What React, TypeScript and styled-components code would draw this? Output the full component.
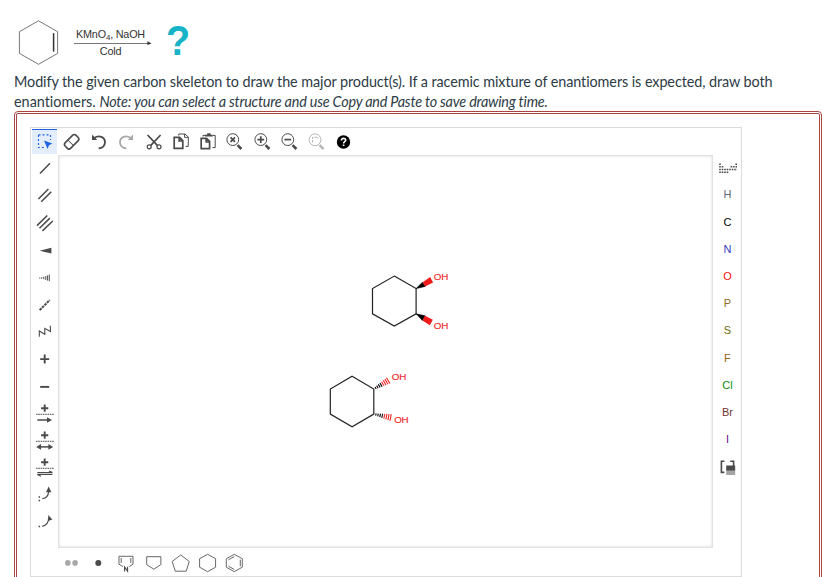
import React from "react";
import styled, { createGlobalStyle } from "styled-components";

const CELL = 27.2;
const INK = "#4a4a4a";
const FAINT = "#a8a8a8";

const GlobalStyle = createGlobalStyle`
  * { box-sizing: border-box; }
  body {
    margin: 0;
    background: #fff;
    overflow: hidden;
  }
`;

const Page = styled.main`
  width: 822px;
  height: 577px;
  overflow: hidden;
  padding-left: 14px;
  font-family: Lato, sans-serif;
  color: #2d3b45;
`;

const Reaction = styled.div`
  display: flex;
  align-items: flex-start;
  height: 72px;
  padding: 19px 0 0 4px;
`;

const Reagents = styled.div`
  width: 78px;
  margin-left: 14px;
  padding-top: 9px;
  display: flex;
  flex-direction: column;
  align-items: center;
  font: 10.8px/12px "Liberation Sans", Arial, sans-serif;
  letter-spacing: -0.2px;
  color: #333;
  white-space: nowrap;

  sub {
    font-size: 8px;
    line-height: 0;
    vertical-align: -2px;
  }
`;

const ReagentLine = styled.span<{ $shift?: number }>`
  height: 12px;
  margin-right: ${(p) => p.$shift ?? 0}px;
`;

const Question = styled.span`
  margin-left: 14px;
  font: bold 43px/42px "Liberation Sans", Arial, sans-serif;
  color: #17b3c6;
  transform: scaleX(0.92);
  transform-origin: left;
`;

const Prompt = styled.p`
  margin: 0;
  height: 39px;
  font-size: 14.4px;
  line-height: 20px;
  white-space: nowrap;
  font-variant-ligatures: none;

  em {
    letter-spacing: -0.2px;
  }
`;

const PromptLine = styled.span<{ $tracking: number }>`
  display: block;
  letter-spacing: ${(p) => p.$tracking}px;
`;

const AnswerFrame = styled.section`
  width: 808px;
  height: 480px;
  border: 3px double #a94442;
  border-radius: 4px;
  padding: 13px;
`;

const Editor = styled.div`
  width: 712px;
  height: 450px;
  border: 1px solid #dcdcdc;
  display: grid;
  grid-template-columns: ${CELL}px 1fr ${CELL}px;
  grid-template-rows: ${CELL}px 1fr ${CELL}px;
`;

const TopBar = styled.div`
  grid-column: 1 / -1;
  display: flex;
`;

const SideBar = styled.div`
  display: flex;
  flex-direction: column;
`;

const BottomBar = styled.div`
  grid-column: 2;
  display: flex;
`;

const ToolButton = styled.button<{ $active?: boolean }>`
  flex: none;
  width: ${CELL}px;
  height: ${CELL}px;
  padding: 0;
  border: 0;
  background: ${(p) =>
    p.$active
      ? "linear-gradient(#1f63e0, #1f63e0) 1px 1px / 25px 1px no-repeat, linear-gradient(#e4edfc, #e4edfc) 1px 1px / 25px 25px no-repeat"
      : "none"};
`;

const ElementButton = styled(ToolButton)`
  padding-bottom: 2px;
  color: ${(p) => p.color};
  font: 11px/25px "Liberation Sans", Arial, sans-serif;
`;

const Glyph = styled.svg`
  display: block;
  width: ${CELL}px;
  height: ${CELL}px;
`;

const Canvas = styled.div`
  margin: 0 0.8px 0.8px 0;
  border: 1px solid #e2e2e2;
  box-shadow: inset 0 0 3px #d8d8d8;
  overflow: hidden;
`;

const Drawing = styled.svg`
  display: block;
`;

const Icon = ({
  children,
  color = INK,
  weight = 1.5,
}: {
  children: React.ReactNode;
  color?: string;
  weight?: number;
}) => (
  <Glyph viewBox="0 0 27.2 27.2" fill="none" stroke={color} strokeWidth={weight}>
    {children}
  </Glyph>
);

const Magnifier = ({ sign, color = INK }: { sign: string; color?: string }) => (
  <Icon color={color}>
    <circle cx="11.8" cy="11.6" r="5.9" strokeWidth="1" />
    <path d="M16.6 17.2l3.8 3.8" strokeWidth="2.6" />
    <path d={sign} strokeWidth="1.7" />
  </Icon>
);

const topTools: [string, React.ReactNode][] = [
  [
    "Select",
    <Icon color="#1f63e0">
      <path d="M7.5 6.9H19.5V12M7.5 6.9V19.5H13" strokeDasharray="2 2" strokeWidth="1.1" />
      <path d="M13 12.6L21.4 15.6L18 17.2L16.6 20.9Z" fill="#1f63e0" stroke="none" />
    </Icon>,
  ],
  [
    "Erase",
    <Icon weight={1.6}>
      <g transform="rotate(-45 13.6 13.7)">
        <rect x="5.9" y="9.9" width="15.4" height="7.8" rx="2.6" />
        <path d="M12.2 9.9v7.8" strokeWidth="1" />
      </g>
    </Icon>,
  ],
  [
    "Undo",
    <Icon weight={1.8}>
      <path d="M9.5 9.8C14 6.6 20 9 20 14.2C20 17.6 17.4 20.2 13.6 20.4" />
      <path d="M7 6.4V12H12.2Z" fill={INK} stroke="none" />
    </Icon>,
  ],
  [
    "Redo",
    <Icon weight={1.8} color={FAINT}>
      <path d="M17.5 9.8C13 6.6 7 9 7 14.2C7 17.6 9.6 20.2 13.4 20.4" />
      <path d="M20 6.4V12H14.8Z" fill={FAINT} stroke="none" />
    </Icon>,
  ],
  [
    "Cut",
    <Icon>
      <path d="M7.6 7L17.6 17.6M20.6 7L10.6 17.6" strokeWidth="1.7" />
      <circle cx="9.2" cy="18.8" r="2" strokeWidth="1.2" />
      <circle cx="19" cy="18.8" r="2" strokeWidth="1.2" />
    </Icon>,
  ],
  [
    "Copy",
    <Icon>
      <path d="M11.8 7.5V6H18L21.3 9V18.4H18.6M17.6 6V9.4H21.3" strokeWidth="1" />
      <path d="M7.2 9.4H12.6L15.8 12.6V20.4H7.2ZM12.2 9.6V13H15.6" strokeWidth="1.7" />
    </Icon>,
  ],
  [
    "Paste",
    <Icon>
      <path d="M9 8.6V7.4H11M19 7.4H21.2V19.6H18.4" strokeWidth="1" />
      <path d="M11 8.4V6.8H13.2V5.2H16.6V6.8H18.8V8.4Z" fill={INK} stroke="none" />
      <path d="M7.2 10.4H12.6L15.6 13.4V20.6H7.2ZM12.2 10.6V14H15.4" strokeWidth="1.7" />
    </Icon>,
  ],
  ["Reset zoom", <Magnifier sign="M9.6 9.4l4.4 4.4M14 9.4l-4.4 4.4" />],
  ["Zoom in", <Magnifier sign="M11.8 8.2v6.8M8.4 11.6h6.8" />],
  ["Zoom out", <Magnifier sign="M8.4 11.6h6.8" />],
  [
    "Zoom to selection",
    <Icon color="#b4b4b4">
      <circle cx="12" cy="11.8" r="5.9" strokeWidth="1" />
      <path d="M16.6 17.2l4 4" strokeWidth="2.4" />
      <path d="M9.5 14.5V9.3H15V10.6" strokeWidth="1" strokeDasharray="2.6 1" />
    </Icon>,
  ],
  [
    "Help",
    <Icon>
      <circle cx="13.5" cy="14" r="6.7" fill="#000" stroke="none" />
      <path
        d="M11.4 12.6C11.3 9.7 15.8 9.8 15.7 12.3C15.6 13.7 13.6 13.7 13.6 15.4M13.6 16.4V18"
        stroke="#fff"
        strokeWidth="1.6"
      />
    </Icon>,
  ],
];

const Reagent = ({ children }: { children: React.ReactNode }) => (
  <Icon>
    <path d="M13.7 4.6v7.2M10.1 8.2h7.2" strokeWidth="1.9" />
    <path d="M5 14.3h18" strokeWidth="1" strokeDasharray="1.6 .7" />
    {children}
  </Icon>
);

const leftTools: [string, React.ReactNode][] = [
  ["Single bond", <Icon><path d="M9 18.5L19 8.3" /></Icon>],
  ["Double bond", <Icon><path d="M7.4 17L17.4 7M10.2 19.7L20.3 9.7" /></Icon>],
  ["Triple bond", <Icon><path d="M6 15.6L16.3 5.5M8.5 18.2L18.9 8.1M11.4 20.9L21.8 11" /></Icon>],
  ["Wedge bond", <Icon><path d="M8.6 13.7L20.4 10.8V16.4Z" fill={INK} stroke="none" /></Icon>],
  [
    "Hash bond",
    <Icon weight={1}>
      <path d="M8.8 13.4v1.2M10.8 13.2v1.6M12.8 12.8v2.4M14.8 12v4M16.6 11.4v5.2M18.3 10.6v6.6" />
    </Icon>,
  ],
  ["Dashed bond", <Icon weight={2}><path d="M8.7 19.1L18.8 9" strokeDasharray="2.6 .8" /></Icon>],
  ["Undefined bond", <Icon weight={1.1}><path d="M8.3 18.8V13L13.8 16.2V10.4L19.4 13.6V7.8" /></Icon>],
  ["Plus", <Icon weight={1.9}><path d="M13.7 8.6v9M9.2 13.1h9" /></Icon>],
  ["Minus", <Icon weight={1.9}><path d="M9.2 13.9h9" /></Icon>],
  [
    "Reaction arrow",
    <Reagent>
      <path d="M6.3 20H18" />
      <path d="M16 17.2L21 20L16 22.8Z" fill={INK} stroke="none" />
    </Reagent>,
  ],
  [
    "Resonance arrow",
    <Reagent>
      <path d="M8 19.9H19" />
      <path d="M17.4 17L22.2 19.9L17.4 22.8ZM10 17L5.2 19.9L10 22.8Z" fill={INK} stroke="none" />
    </Reagent>,
  ],
  [
    "Equilibrium arrow",
    <Reagent>
      <path d="M6.3 18.6H21.4L18 16.9M21.4 20.5H6.3L10 22.2" strokeWidth="1.1" />
    </Reagent>,
  ],
  [
    "Electron pair arrow",
    <Icon weight={1.2}>
      <path d="M11.3 17.7C15.4 17.4 17.4 14.8 17.6 10.5" />
      <path d="M15 11.2L17.7 5.6L20.4 11.2Z M7.6 15.3h1.5v1.5h-1.5zM7.6 18.7h1.5v1.5h-1.5z" fill={INK} stroke="none" />
    </Icon>,
  ],
  [
    "Single electron arrow",
    <Icon weight={1.2}>
      <path d="M11.3 17.3C15.6 16.4 17.6 13.6 17.7 8.8" />
      <path d="M17.2 6V12L21.4 10.6Z M7.6 16.8h1.5v1.5h-1.5z" fill={INK} stroke="none" />
    </Icon>,
  ],
];

const bottomTools: [string, React.ReactNode][] = [
  [
    "Lone pair",
    <Icon>
      <circle cx="9.8" cy="13.9" r="2.8" fill={FAINT} stroke="none" />
      <circle cx="17.1" cy="13.9" r="2.8" fill={FAINT} stroke="none" />
    </Icon>,
  ],
  ["Radical", <Icon><circle cx="13.3" cy="13.9" r="3" fill={INK} stroke="none" /></Icon>],
  [
    "Pyrrole",
    <Icon weight={1} color="#666">
      <path d="M10 17.6L6 15.2V7.3H20V15.2L16.4 17.6M8.2 9V14M17.8 9V14" />
      <path d="M11.6 22.4V18L14.6 22.2V17.8" strokeWidth="1.1" stroke={INK} />
    </Icon>,
  ],
  ["Cyclopentane, flat top", <Icon weight={1} color="#666"><path d="M6.7 7.7H20.9V15.6L13.8 20.2L6.7 15.6Z" /></Icon>],
  ["Cyclopentane", <Icon weight={1} color="#666"><path d="M13.7 5.9L22.3 12.5L19.2 22.2H8.3L5.2 12.5Z" /></Icon>],
  ["Cyclohexane", <Icon weight={1} color="#666"><path d="M13.6 5.3L21.6 9.7V18.2L13.6 22.7L5.6 18.2V9.7Z" /></Icon>],
  [
    "Benzene",
    <Icon weight={1} color="#666">
      <path d="M13.3 5.3L21.3 9.7V18.2L13.3 22.7L5.3 18.2V9.7Z M7.4 10.8L13.3 7.6M19.3 10.7V17.3M7.4 17.2L13.3 20.4" />
    </Icon>,
  ],
];

const elements: [string, string][] = [
  ["H", "#606672"],
  ["C", "#000"],
  ["N", "#3838c0"],
  ["O", "#f01010"],
  ["P", "#90682a"],
  ["S", "#6c6c10"],
  ["F", "#966010"],
  ["Cl", "#0c8c0c"],
  ["Br", "#703030"],
  ["I", "#680a90"],
];

const HashBond = ({ x1, y1, x2, y2 }: { x1: number; y1: number; x2: number; y2: number }) => {
  const length = Math.hypot(x2 - x1, y2 - y1);
  const nx = -(y2 - y1) / length;
  const ny = (x2 - x1) / length;
  return (
    <>
      {Array.from({ length: 8 }, (_, i) => {
        const t = (i + 1) / 8;
        const half = 0.8 + t * 2.6;
        const x = x1 + (x2 - x1) * t;
        const y = y1 + (y2 - y1) * t;
        return (
          <line
            key={i}
            x1={x - nx * half}
            y1={y - ny * half}
            x2={x + nx * half}
            y2={y + ny * half}
            stroke={t > 0.55 ? "#f02020" : "#000"}
            strokeWidth="1.1"
          />
        );
      })}
    </>
  );
};

const Tools = ({ items, active }: { items: [string, React.ReactNode][]; active?: string }) => (
  <>
    {items.map(([name, icon]) => (
      <ToolButton key={name} aria-label={name} $active={name === active}>
        {icon}
      </ToolButton>
    ))}
  </>
);

const Molecules = () => (
  <Drawing width="653" height="391" viewBox="59.2 156.2 653 391" fill="none" stroke="#222" strokeWidth="1.2">
    <path d="M394.5 276.3L416.3 288.8V314L394.5 326.3L372.7 314V288.8Z" />
    <path d="M416.3 288.8L422.6 282.5L425.5 286.6ZM416.3 314L425.3 316L422.6 320.7Z" fill="#000" stroke="#000" strokeWidth=".6" />
    <path d="M422.8 282.4L430.4 277.3L433.3 282.6L425.4 286.7ZM425.2 316L433 320L430 325.4L422.7 320.8Z" fill="#ee1c1c" stroke="none" />
    <path d="M352.3 376.5L374 389.2V414.3L352.3 426.9L330.5 414.3V389.2Z" />
    <HashBond x1={374} y1={389.2} x2={388.4} y2={380.8} />
    <HashBond x1={374} y1={414.3} x2={390.8} y2={417.7} />
    <g
      fill="#f02a2a"
      stroke="#f02a2a"
      strokeWidth=".15"
      fontFamily="'Liberation Sans', Arial, sans-serif"
      fontSize="9.8"
      letterSpacing="-.2"
    >
      <text x="434" y="280.2">OH</text>
      <text x="434" y="329.5">OH</text>
      <text x="392" y="380.3">OH</text>
      <text x="394.4" y="422.9">OH</text>
    </g>
  </Drawing>
);

export default function App() {
  return (
    <Page>
      <GlobalStyle />
      <Reaction>
        <Drawing width="42" height="47" viewBox="18 19 42 47" fill="none" stroke="#777" strokeWidth="1">
          <path d="M38.5 20.8L57.6 31.7V53.4L38.5 64.3L19.4 53.4V31.7Z" />
          <path d="M53.6 33.2V51.6" stroke="#333" strokeWidth="1.5" />
        </Drawing>
        <Reagents>
          <ReagentLine $shift={5}>
            KMnO<sub>4</sub>, NaOH
          </ReagentLine>
          <Drawing width="78" height="5" viewBox="0 0 78 5">
            <path d="M0 3.5H75" stroke="#777" />
            <path d="M73.4 1.2L77.6 3.5L73.4 5Z" fill="#333" />
          </Drawing>
          <ReagentLine $shift={5}>Cold</ReagentLine>
        </Reagents>
        <Question>?</Question>
      </Reaction>
      <Prompt>
        <PromptLine $tracking={-0.08}>
          Modify the given carbon skeleton to draw the major product(s). If a racemic mixture of enantiomers is expected, draw both
        </PromptLine>
        <PromptLine $tracking={0}>
          enantiomers. <em>Note: you can select a structure and use Copy and Paste to save drawing time.</em>
        </PromptLine>
      </Prompt>
      <AnswerFrame>
        <Editor>
          <TopBar>
            <Tools items={topTools} active="Select" />
          </TopBar>
          <SideBar>
            <Tools items={leftTools} />
          </SideBar>
          <Canvas>
            <Molecules />
          </Canvas>
          <SideBar>
            <ToolButton aria-label="Periodic table">
              <Icon weight={1.5}>
                <path
                  d="M5.2 9.2h1.6M21.4 9.2h1.6M5.2 11.8h4.2M16.6 11.8h6.4M5.2 14.6h17.8M5.2 17.2h10"
                  strokeDasharray="1.6 .9"
                />
              </Icon>
            </ToolButton>
            {elements.map(([symbol, color]) => (
              <ElementButton key={symbol} color={color}>
                {symbol}
              </ElementButton>
            ))}
            <ToolButton aria-label="Abbreviated group">
              <Icon>
                <path d="M10.4 7.2H7.4V18.4H10.4M16.2 7.2H19.6V12" strokeWidth="1.6" />
                <path
                  d="M12.2 11.6h9v5.2h-9zM12.2 17.6h9v1h-9zM12.2 19.6h9v1h-9z"
                  fill={INK}
                  stroke="none"
                />
              </Icon>
            </ToolButton>
          </SideBar>
          <BottomBar>
            <Tools items={bottomTools} />
          </BottomBar>
        </Editor>
      </AnswerFrame>
    </Page>
  );
}
